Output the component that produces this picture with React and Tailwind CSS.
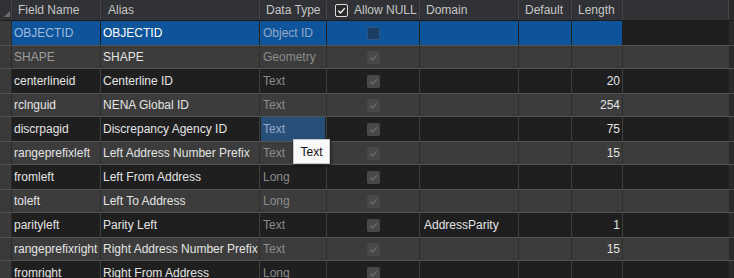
import React from 'react';

const cols = [
  { key: 'name', label: 'Field Name', w: 'w-[89px]' },
  { key: 'alias', label: 'Alias', w: 'w-[159px]' },
  { key: 'type', label: 'Data Type', w: 'w-[67px]' },
  { key: 'nul', label: 'Allow NULL', w: 'w-[93px]' },
  { key: 'domain', label: 'Domain', w: 'w-[99px]' },
  { key: 'def', label: 'Default', w: 'w-[53px]' },
  { key: 'len', label: 'Length', w: 'w-[51px]' },
];

const rows = [
  { name: 'OBJECTID', alias: 'OBJECTID', type: 'Object ID', locked: true, selected: true },
  { name: 'SHAPE', alias: 'SHAPE', type: 'Geometry', locked: true },
  { name: 'centerlineid', alias: 'Centerline ID', type: 'Text', len: '20' },
  { name: 'rclnguid', alias: 'NENA Global ID', type: 'Text', len: '254' },
  { name: 'discrpagid', alias: 'Discrepancy Agency ID', type: 'Text', len: '75', hot: true },
  { name: 'rangeprefixleft', alias: 'Left Address Number Prefix', type: 'Text', len: '15' },
  { name: 'fromleft', alias: 'Left From Address', type: 'Long' },
  { name: 'toleft', alias: 'Left To Address', type: 'Long' },
  { name: 'parityleft', alias: 'Parity Left', type: 'Text', domain: 'AddressParity', len: '1' },
  { name: 'rangeprefixright', alias: 'Right Address Number Prefix', type: 'Text', len: '15' },
  { name: 'fromright', alias: 'Right From Address', type: 'Long' },
];

const Check = ({ className, stroke }) => (
  <svg viewBox="0 0 12 12" className={className}>
    <path d="M2.5 6.2 L5 8.6 L9.6 3.4" fill="none" stroke={stroke} strokeWidth="1.6" />
  </svg>
);

const Row = ({ r, i }) => {
  const light = i % 2 === 1;
  const sel = r.selected;
  const rowCls = sel
    ? 'bg-[#1f1f1f]'
    : light
    ? 'bg-[#3c3c3c] border-y border-[#525252]'
    : 'bg-[#1f1f1f]';
  const cellBorder = sel ? 'border-[#1f1f1f]' : light ? 'border-[#2f2f2f]' : 'border-[#3d3d3d]';
  const cellBg = sel ? 'bg-[#0e549b]' : '';

  return (
    <div className={`flex h-6 shrink-0 ${rowCls}`}>
      <div className="w-[12px] shrink-0 bg-[#3a3a3a] border-r border-[#2a2a2a]" />
      {cols.map((c) => {
        let content = null;
        let extra = 'pl-[2px]';
        if (c.key === 'name') {
          content = (
            <span className={sel ? 'text-[#9fbbdb]' : r.locked ? 'text-[#9c9c9c]' : 'text-[#e4e4e4]'}>
              {r.name}
            </span>
          );
        } else if (c.key === 'alias') {
          content = <span className={sel ? 'text-white' : 'text-[#e4e4e4]'}>{r.alias}</span>;
        } else if (c.key === 'type') {
          extra = 'pl-[3px] relative';
          content = (
            <>
              {r.hot && <div className="absolute left-[1px] top-0 bottom-0 right-[1px] bg-[#284f78]" />}
              <span className={`relative ${sel || r.hot ? 'text-[#93aac6]' : 'text-[#8c8c8c]'}`}>{r.type}</span>
            </>
          );
        } else if (c.key === 'nul') {
          extra = 'justify-center';
          content = sel ? (
            <div className="w-[13px] h-[13px] rounded-[2px] bg-[#1d3e63] border border-[#2a5584]" />
          ) : (
            <div className="w-[13px] h-[13px] rounded-[2px] bg-[#484848] flex items-center justify-center">
              <Check className="w-[11px] h-[11px]" stroke="#6c6c6c" />
            </div>
          );
        } else if (c.key === 'domain') {
          content = <span className="text-[#e4e4e4] pl-[2px]">{r.domain}</span>;
        } else if (c.key === 'len') {
          extra = 'justify-end pr-[2px]';
          content = <span className="text-[#e4e4e4]">{r.len}</span>;
        }
        return (
          <div
            key={c.key}
            className={`${c.w} shrink-0 flex items-center border-r ${cellBorder} ${cellBg} ${extra} overflow-hidden whitespace-nowrap`}
          >
            {content}
          </div>
        );
      })}
      <div className="w-[106px] shrink-0" />
      <div className="w-[5px] shrink-0 bg-[#2a2a2a]" />
    </div>
  );
};

export default function App() {
  return (
    <div
      className="relative w-[734px] h-[278px] overflow-hidden bg-[#1f1f1f] text-[12px] flex flex-col"
      style={{ fontFamily: '"Liberation Sans", Arial, sans-serif' }}
    >
      {/* header */}
      <div className="flex h-[21px] shrink-0 bg-[#303235] border-b border-[#1c1c1c] text-[#c6c6c6]">
        <div className="w-[12px] shrink-0 relative border-r border-[#454545]">
          <svg viewBox="0 0 6 6" className="absolute left-[4px] top-[11px] w-[6px] h-[6px]">
            <path d="M6 0 L6 6 L0 6 Z" fill="#6e6e6e" />
          </svg>
        </div>
        {cols.map((c) => (
          <div
            key={c.key}
            className={`${c.w} shrink-0 flex items-center border-r border-[#454545] ${c.key === 'alias' ? 'pl-[7px]' : c.key === 'nul' ? 'pl-[8px]' : 'pl-[6px]'}`}
          >
            {c.key === 'nul' && (
              <div className="w-[13px] h-[13px] mr-[6px] rounded-[2px] border border-[#dcdcdc] bg-[#2a2a2a] flex items-center justify-center">
                <Check className="w-[11px] h-[11px]" stroke="#f0f0f0" />
              </div>
            )}
            {c.label}
          </div>
        ))}
        <div className="w-[106px] shrink-0 border-r border-[#454545]" />
        <div className="w-[5px] shrink-0 bg-[#2a2a2a]" />
      </div>

      {rows.map((r, i) => (
        <Row key={r.name} r={r} i={i} />
      ))}

      {/* tooltip */}
      <div className="absolute left-[293px] top-[139px] w-[37px] h-[25px] bg-[#fafafa] border border-[#c8c8c8] shadow-[1px_2px_3px_rgba(0,0,0,0.5)] flex items-center justify-center text-[#111] text-[12px]">
        Text
      </div>
    </div>
  );
}
